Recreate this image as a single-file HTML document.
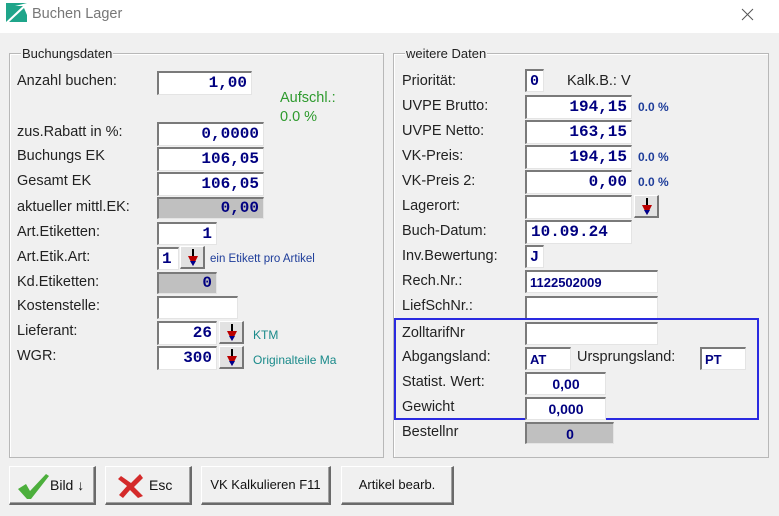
<!DOCTYPE html>
<html><head><style>
body{margin:0;width:779px;height:516px;background:#f0f0f0;font-family:"Liberation Sans",Arial,sans-serif;position:relative;overflow:hidden}
.a{position:absolute}
.t{position:absolute;font-size:14.5px;color:#222;white-space:nowrap;margin-top:1px}
.i{position:absolute;background:#fff;box-sizing:border-box;border-top:2px solid #7a7a7a;border-left:2px solid #7a7a7a;border-right:1px solid #e4e4e4;border-bottom:1px solid #e4e4e4;color:#000080;font-family:"Liberation Mono",monospace;font-weight:bold;font-size:16px;text-align:right;padding-right:4px;line-height:21px}
.g{background:#c0c0c0}
.s{font-family:"Liberation Sans",Arial,sans-serif;font-size:13px;text-align:left;padding-left:3px}
.c{text-align:center;padding:0;font-family:"Liberation Sans",Arial,sans-serif;font-size:14px}
.btn{position:absolute;width:25px;height:23px;box-sizing:border-box;background:#e2e2e2;border:1px solid #fff;border-right:2px solid #777;border-bottom:2px solid #777}
.btn svg{position:absolute;left:6px;top:2px}
.gb{position:absolute;border:1px solid #b8b8b8;box-shadow:inset 1px 1px 0 #fff}
.gl{position:absolute;background:#f0f0f0;font-size:13px;color:#222;padding:0 1px}
.pb{position:absolute;height:39px;box-sizing:border-box;background:#f0f0f0;border:1px solid #fff;border-right:2px solid #6a6a6a;border-bottom:2px solid #6a6a6a;box-shadow:inset -1px -1px 0 #a0a0a0;font-size:13px;color:#111;text-align:center;line-height:36px}
</style></head><body>
<div class="a" style="left:0;top:0;width:779px;height:33px;background:#fff"></div>
<svg class="a" style="left:6px;top:3px" width="21" height="19"><rect width="21" height="19" fill="#1fa58a"/><path d="M0 19 L17 3 L9 3 L21 0 L21 12 L18 5 L3 19Z" fill="#fff"/></svg>
<div class="t" style="left:32px;top:5px;font-size:14.5px;color:#777">Buchen Lager</div>
<svg class="a" style="left:741px;top:8px" width="13" height="13"><path d="M1 1 L12 12 M12 1 L1 12" stroke="#555" stroke-width="1"/></svg>

<div class="gb" style="left:9px;top:53px;width:373px;height:403px"></div>
<div class="gl" style="left:21px;top:46px">Buchungsdaten</div>
<div class="gb" style="left:393px;top:53px;width:374px;height:403px"></div>
<div class="gl" style="left:405px;top:46px">weitere Daten</div>

<div class="t" style="left:17px;top:72px">Anzahl buchen:</div>
<div class="i" style="left:157px;top:71px;width:95px;height:24px">1,00</div>
<div class="t" style="left:280px;top:89px;color:#2e9a2e">Aufschl.:</div>
<div class="t" style="left:280px;top:108px;color:#2e9a2e">0.0 %</div>
<div class="t" style="left:17px;top:123px">zus.Rabatt in %:</div>
<div class="i" style="left:157px;top:122px;width:107px;height:24px">0,0000</div>
<div class="t" style="left:17px;top:147px">Buchungs EK</div>
<div class="i" style="left:157px;top:147px;width:107px;height:24px">106,05</div>
<div class="t" style="left:17px;top:172px">Gesamt EK</div>
<div class="i" style="left:157px;top:172px;width:107px;height:24px">106,05</div>
<div class="t" style="left:17px;top:198px">aktueller mittl.EK:</div>
<div class="i g" style="left:157px;top:197px;width:107px;height:22px;line-height:19px">0,00</div>
<div class="t" style="left:17px;top:223px">Art.Etiketten:</div>
<div class="i" style="left:157px;top:222px;width:60px;height:23px">1</div>
<div class="t" style="left:17px;top:248px">Art.Etik.Art:</div>
<div class="i" style="left:157px;top:247px;width:22px;height:23px;text-align:left;padding-left:3px">1</div>
<div class="btn" style="left:180px;top:246px"><svg width="12" height="18"><rect x="5" y="0" width="2" height="10" fill="#000"/><path d="M1 7 L11 7 L6 17Z" fill="#b00"/><path d="M3 12 L9 12 L6 17Z" fill="#00008b"/></svg></div>
<div class="t" style="left:210px;top:252px;font-size:11.5px;color:#1e3d9a">ein Etikett pro Artikel</div>
<div class="t" style="left:17px;top:273px">Kd.Etiketten:</div>
<div class="i g" style="left:157px;top:272px;width:60px;height:22px;line-height:19px">0</div>
<div class="t" style="left:17px;top:297px">Kostenstelle:</div>
<div class="i" style="left:157px;top:296px;width:81px;height:23px"></div>
<div class="t" style="left:17px;top:322px">Lieferant:</div>
<div class="i" style="left:157px;top:321px;width:60px;height:24px">26</div>
<div class="btn" style="left:219px;top:321px"><svg width="12" height="18"><rect x="5" y="0" width="2" height="10" fill="#000"/><path d="M1 7 L11 7 L6 17Z" fill="#b00"/><path d="M3 12 L9 12 L6 17Z" fill="#00008b"/></svg></div>
<div class="t" style="left:253px;top:327px;font-size:12px;color:#1a8a8a">KTM</div>
<div class="t" style="left:17px;top:347px">WGR:</div>
<div class="i" style="left:157px;top:346px;width:60px;height:24px">300</div>
<div class="btn" style="left:219px;top:346px"><svg width="12" height="18"><rect x="5" y="0" width="2" height="10" fill="#000"/><path d="M1 7 L11 7 L6 17Z" fill="#b00"/><path d="M3 12 L9 12 L6 17Z" fill="#00008b"/></svg></div>
<div class="t" style="left:253px;top:352px;font-size:12px;color:#1a8a8a">Originalteile Ma</div>

<div class="t" style="left:402px;top:72px">Priorität:</div>
<div class="i" style="left:525px;top:69px;width:19px;height:23px;text-align:left;padding-left:3px;font-size:15px">0</div>
<div class="t" style="left:567px;top:72px">Kalk.B.: V</div>
<div class="t" style="left:402px;top:97px">UVPE Brutto:</div>
<div class="i" style="left:525px;top:95px;width:107px;height:24px">194,15</div>
<div class="t" style="left:638px;top:99px;font-size:12px;font-weight:bold;color:#1e3d9a">0.0 %</div>
<div class="t" style="left:402px;top:122px">UVPE Netto:</div>
<div class="i" style="left:525px;top:120px;width:107px;height:24px">163,15</div>
<div class="t" style="left:402px;top:147px">VK-Preis:</div>
<div class="i" style="left:525px;top:145px;width:107px;height:24px">194,15</div>
<div class="t" style="left:638px;top:149px;font-size:12px;font-weight:bold;color:#1e3d9a">0.0 %</div>
<div class="t" style="left:402px;top:172px">VK-Preis 2:</div>
<div class="i" style="left:525px;top:170px;width:107px;height:24px">0,00</div>
<div class="t" style="left:638px;top:174px;font-size:12px;font-weight:bold;color:#1e3d9a">0.0 %</div>
<div class="t" style="left:402px;top:197px">Lagerort:</div>
<div class="i" style="left:525px;top:195px;width:107px;height:24px"></div>
<div class="btn" style="left:634px;top:195px"><svg width="12" height="18"><rect x="5" y="0" width="2" height="10" fill="#000"/><path d="M1 7 L11 7 L6 17Z" fill="#b00"/><path d="M3 12 L9 12 L6 17Z" fill="#00008b"/></svg></div>
<div class="t" style="left:402px;top:222px">Buch-Datum:</div>
<div class="i" style="left:525px;top:220px;width:107px;height:24px;text-align:left;padding-left:4px">10.09.24</div>
<div class="t" style="left:402px;top:247px">Inv.Bewertung:</div>
<div class="i" style="left:525px;top:245px;width:19px;height:23px;text-align:left;padding-left:3px;font-size:15px">J</div>
<div class="t" style="left:402px;top:272px">Rech.Nr.:</div>
<div class="i s" style="left:525px;top:270px;width:133px;height:23px;font-weight:bold">1122502009</div>
<div class="t" style="left:402px;top:297px">LiefSchNr.:</div>
<div class="i" style="left:525px;top:296px;width:133px;height:23px"></div>
<div class="a" style="left:394px;top:318px;width:361px;height:98px;border:2px solid #2a2ae0"></div>
<div class="t" style="left:402px;top:324px">ZolltarifNr</div>
<div class="i" style="left:525px;top:322px;width:133px;height:23px"></div>
<div class="t" style="left:402px;top:348px">Abgangsland:</div>
<div class="i s" style="left:525px;top:347px;width:46px;height:23px;font-weight:bold">AT</div>
<div class="t" style="left:577px;top:348px">Ursprungsland:</div>
<div class="i s" style="left:700px;top:347px;width:46px;height:23px;font-weight:bold">PT</div>
<div class="t" style="left:402px;top:373px">Statist. Wert:</div>
<div class="i c" style="left:525px;top:372px;width:81px;height:23px;font-weight:bold;line-height:21px">0,00</div>
<div class="t" style="left:402px;top:398px">Gewicht</div>
<div class="i c" style="left:525px;top:397px;width:81px;height:23px;font-weight:bold;line-height:21px">0,000</div>
<div class="t" style="left:402px;top:423px">Bestellnr</div>
<div class="i g c" style="left:525px;top:422px;width:89px;height:22px;font-weight:bold;line-height:20px">0</div>

<div class="pb" style="left:9px;top:466px;width:87px"><svg class="a" style="left:6px;top:5px" width="34" height="28"><path d="M2 17 L10 12 L14 19 L30 2 L33 4 L15 27 L11 27Z" fill="#4caf3c"/></svg><span style="position:absolute;left:40px;font-size:14px">Bild ↓</span></div>
<div class="pb" style="left:105px;top:466px;width:87px"><svg class="a" style="left:12px;top:6px" width="26" height="26"><path d="M3 3 L13 10 L22 1 L25 5 L16 14 L25 23 L20 25 L12 17 L5 25 L1 22 L9 13 L0 6Z" fill="#d42a2a"/></svg><span style="position:absolute;left:43px;font-size:14px">Esc</span></div>
<div class="pb" style="left:201px;top:466px;width:130px">VK Kalkulieren F11</div>
<div class="pb" style="left:341px;top:466px;width:113px">Artikel bearb.</div>
</body></html>
